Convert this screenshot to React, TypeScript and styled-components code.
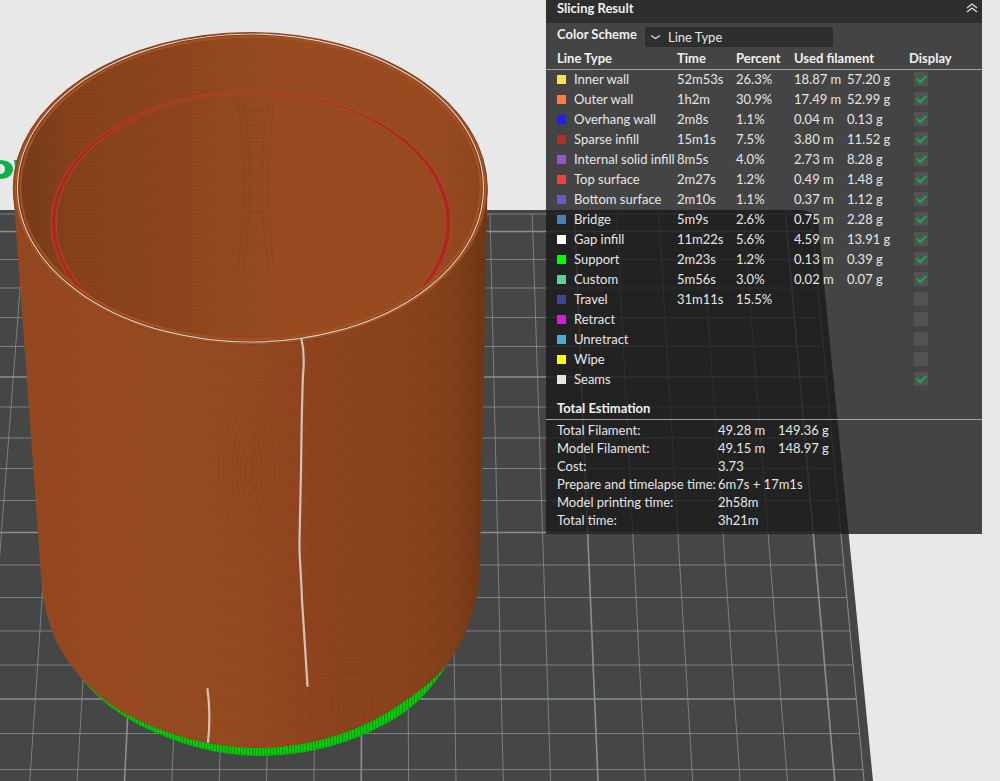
import React, { useState } from 'react';
import styled, { createGlobalStyle } from 'styled-components';

const GlobalStyle = createGlobalStyle`
  *, *::before, *::after { box-sizing: border-box; }
  body {
    margin: 0;
    background: #e8e8e8;
    color: #e6e6e6;
    font-family: Lato, "Liberation Sans", sans-serif;
    font-size: 13px;
    line-height: 18px;
  }
`;

const Viewport = styled.main`
  display: grid;
  min-height: 100vh;
  overflow: hidden;
`;

const Scene = styled.svg`
  grid-area: 1 / 1;
  display: block;
  width: 100%;
  height: 100vh;
`;

const Panel = styled.section`
  grid-area: 1 / 1;
  z-index: 1;
  place-self: start end;
  width: 436px;
  max-width: 100%;
  margin-right: 18px;
  padding-bottom: 5px;
  background: rgba(24, 24, 24, 0.79);
`;

const TitleBar = styled.header`
  display: flex;
  align-items: center;
  justify-content: space-between;
  height: 23px;
  padding: 0 3px 8px 11px;
  background: #2e2e2e;
`;

const Heading = styled.h2`
  margin: 0;
  font-size: 13px;
  line-height: 18px;
  font-weight: 700;
  color: #f0f0f0;
`;

const CollapseButton = styled.button`
  display: grid;
  place-items: center;
  width: 14px;
  height: 14px;
  padding: 0;
  border: 0;
  background: none;
  color: #e0e0e0;
`;

const SchemeRow = styled.div`
  display: flex;
  align-items: flex-start;
  gap: 8px;
  height: 24px;
  padding: 2px 0 0 11px;
`;

const SchemeLabel = styled.label`
  width: 80px;
  font-weight: 700;
  color: #f0f0f0;
`;

const SelectBox = styled.div`
  display: grid;
  align-items: center;
  width: 188px;
  height: 20px;
  margin-top: 2px;
  border-radius: 2px;
  background: #2e2e2e;

  > * { grid-area: 1 / 1; }
  svg { margin-left: 5px; pointer-events: none; z-index: 1; }
`;

const Select = styled.select`
  appearance: none;
  width: 100%;
  height: 20px;
  padding: 0 0 0 23px;
  border: 0;
  background: none;
  color: #e6e6e6;
  font: inherit;
`;

const LineTable = styled.table`
  width: 100%;
  table-layout: fixed;
  border-collapse: collapse;
  white-space: nowrap;

  th, td { height: 20px; padding: 0; text-align: left; font-weight: 400; line-height: 18px; }
  th:first-child { padding-left: 11px; }
  thead th {
    height: 22px;
    border-bottom: 1px solid #a0a0a0;
    font-weight: 700;
    color: #f0f0f0;
  }
`;

const Name = styled.span`
  display: flex;
  align-items: center;
  gap: 8px;
`;

const Swatch = styled.span<{ $color: string }>`
  width: 9px;
  height: 9px;
  background: ${(p) => p.$color};
`;

const Check = styled.input`
  appearance: none;
  display: grid;
  width: 14px;
  height: 14px;
  margin: 0 0 0 5px;
  background: rgba(255, 255, 255, 0.08);

  &:checked::before {
    content: '';
    margin: 3px 1px 2px 2px;
    background: #0fae4b;
    clip-path: polygon(0 48%, 14% 34%, 38% 62%, 88% 2%, 100% 16%, 38% 98%);
  }
`;

const TotalsHeading = styled(Heading)`
  height: 31px;
  padding: 10px 0 0 11px;
  border-bottom: 1px solid #a0a0a0;
  margin-bottom: 1px;
`;

const TotalsTable = styled.table`
  width: 100%;
  table-layout: fixed;
  border-collapse: collapse;
  white-space: nowrap;

  th, td { height: 18px; padding: 0; text-align: left; font-weight: 400; line-height: 18px; }
  th { padding-left: 11px; }
`;

type Line = {
  name: string;
  color: string;
  time?: string;
  percent?: string;
  metres?: string;
  grams?: string;
  shown: boolean;
};

const lines: Line[] = [
  { name: 'Inner wall', color: '#ffe04d', time: '52m53s', percent: '26.3%', metres: '18.87 m', grams: '57.20 g', shown: true },
  { name: 'Outer wall', color: '#ff7d38', time: '1h2m', percent: '30.9%', metres: '17.49 m', grams: '52.99 g', shown: true },
  { name: 'Overhang wall', color: '#1f1fff', time: '2m8s', percent: '1.1%', metres: '0.04 m', grams: '0.13 g', shown: true },
  { name: 'Sparse infill', color: '#b03029', time: '15m1s', percent: '7.5%', metres: '3.80 m', grams: '11.52 g', shown: true },
  { name: 'Internal solid infill', color: '#9654cc', time: '8m5s', percent: '4.0%', metres: '2.73 m', grams: '8.28 g', shown: true },
  { name: 'Top surface', color: '#f04040', time: '2m27s', percent: '1.2%', metres: '0.49 m', grams: '1.48 g', shown: true },
  { name: 'Bottom surface', color: '#665cc7', time: '2m10s', percent: '1.1%', metres: '0.37 m', grams: '1.12 g', shown: true },
  { name: 'Bridge', color: '#4d80ba', time: '5m9s', percent: '2.6%', metres: '0.75 m', grams: '2.28 g', shown: true },
  { name: 'Gap infill', color: '#ffffff', time: '11m22s', percent: '5.6%', metres: '4.59 m', grams: '13.91 g', shown: true },
  { name: 'Support', color: '#00ff00', time: '2m23s', percent: '1.2%', metres: '0.13 m', grams: '0.39 g', shown: true },
  { name: 'Custom', color: '#5ed194', time: '5m56s', percent: '3.0%', metres: '0.02 m', grams: '0.07 g', shown: true },
  { name: 'Travel', color: '#38489b', time: '31m11s', percent: '15.5%', shown: false },
  { name: 'Retract', color: '#cd22d6', shown: false },
  { name: 'Unretract', color: '#49adcf', shown: false },
  { name: 'Wipe', color: '#ffff00', shown: false },
  { name: 'Seams', color: '#e6e6e6', shown: true },
];

const totals: [string, string, string?][] = [
  ['Total Filament:', '49.28 m', '149.36 g'],
  ['Model Filament:', '49.15 m', '148.97 g'],
  ['Cost:', '3.73'],
  ['Prepare and timelapse time:', '6m7s + 17m1s'],
  ['Model printing time:', '2h58m'],
  ['Total time:', '3h21m'],
];

const plateRows = [214, 231.5, 259.5, 288, 317.5, 346.5, 377, 407, 438, 468.5, 500.5, 532.5, 565, 597.5, 631, 665, 699, 733.5, 769.5];
const majorRows = [1, 6, 11, 16];
const plateColumns = Array.from({ length: 20 }, (_, i) => i - 7);

const BODY =
  'M13 188 L40 560 C41 590 46 614 52 631 C58 648 70 665 83 680 C95 693 108 704 126 714 C165 735 210 748 260 748 C315 747 365 730 405 701 C420 691 434 680 446 666 C462 645 471 622 477 596 C479 585 480 570 480 560 L487.500 188 Z';
const SKIRT =
  'M83 680 C98 699 122 716 140 725 C180 745 220 755.500 260 755.500 C320 755 365 737 400 715 C420 702 434 684 446 666 L405 690 L260 730 L126 700 Z';

function PrintPreview() {
  const right = (y: number) => 811 + (y - 214) * 0.0935;
  return (
    <Scene viewBox="0 0 1000 781" preserveAspectRatio="xMinYMin slice" role="img" aria-label="Sliced cup on the build plate">
      <defs>
        <linearGradient id="outside" x1="13" x2="487" y1="0" y2="0" gradientUnits="userSpaceOnUse">
          <stop offset="0" stopColor="#944720" />
          <stop offset="0.25" stopColor="#984b20" />
          <stop offset="0.48" stopColor="#944920" />
          <stop offset="0.64" stopColor="#8e431d" />
          <stop offset="0.82" stopColor="#88431c" />
          <stop offset="0.93" stopColor="#7f3f1a" />
          <stop offset="1" stopColor="#6c3615" />
        </linearGradient>
        <linearGradient id="inside" x1="17" x2="484" y1="0" y2="0" gradientUnits="userSpaceOnUse">
          <stop offset="0" stopColor="#75391a" />
          <stop offset="0.12" stopColor="#86411b" />
          <stop offset="0.35" stopColor="#8e441d" />
          <stop offset="0.55" stopColor="#984b20" />
          <stop offset="0.9" stopColor="#984b20" />
          <stop offset="1" stopColor="#8e441d" />
        </linearGradient>
        <pattern id="layers" width="4" height="3" patternUnits="userSpaceOnUse">
          <rect width="4" height="1" fill="#5f2b10" opacity="0.07" />
          <rect y="2" width="2" height="1" fill="#c0682f" opacity="0.07" />
        </pattern>
        <pattern id="brim" width="3" height="12" patternUnits="userSpaceOnUse">
          <rect width="3" height="12" fill="#02cc05" />
          <rect width="1" height="12" fill="#04960a" />
        </pattern>
        <clipPath id="opening"><ellipse cx="250.500" cy="188" rx="233" ry="154" /></clipPath>
        <clipPath id="bodyClip"><path d={BODY} /></clipPath>
      </defs>

      <path d="M0 160 C8 160 13 164 13 169 C13 175 8 179 0 179 V174 C3 174 5 172 5 169 C5 166 3 164 0 164 Z" fill="#0cb04a" />
      <path d="M14 160 L18 160 L15 167 Z" fill="#0cb04a" />

      <path d="M0 210 H798 Q816 210 818 222 L873 781 H0 Z" fill="#444745" />
      <g stroke="#8b8f8c">
        {plateRows.map((y, i) => (
          <line key={y} x1="0" x2={right(y)} y1={y} y2={y} strokeWidth={majorRows.includes(i) ? 1.6 : 1} opacity={majorRows.includes(i) ? 1 : 0.8} />
        ))}
        {plateColumns.map((k) => {
          const major = (k + 7) % 5 === 0;
          return (
            <line key={k} x1={490 - 42.2 * k} y1="214" x2={503.3 - 47.35 * k} y2="781" strokeWidth={major ? 1.6 : 1} opacity={major ? 1 : 0.8} />
          );
        })}
        <line x1="811" y1="214" x2="864" y2="781" />
      </g>

      <path d={SKIRT} fill="url(#brim)" stroke="#04b808" strokeWidth="0.8" />
      <path d={BODY} fill="url(#outside)" />
      <ellipse cx="250.250" cy="188.500" rx="237.200" ry="156" fill="#9a4b1f" />
      <g clipPath="url(#bodyClip)">
        <rect x="0" y="188" width="500" height="570" fill="url(#layers)" />
        <g fill="none" stroke="#6a3013" strokeWidth="1" opacity="0.3">
          {[5, 10, 15, 20, 25, 30, 36].map((r, i) => (
            <ellipse key={r} cx="249" cy="470" rx={r * 0.85} ry={r * 2.6} opacity={1 - i * 0.12} />
          ))}
          {[0, 1, 2, 3, 4, 5, 6, 7].map((i) => (
            <path key={i} d={`M${333 - i * 2} ${590 + i * 14} Q352 ${560 + i * 14} ${371 + i * 2} ${590 + i * 14}`} opacity="0.5" />
          ))}
          {[8, 14, 20].map((r) => (
            <ellipse key={r} cx="352" cy="705" rx={r} ry={r * 1.7} opacity="0.6" />
          ))}
        </g>
      </g>

      <ellipse cx="250.500" cy="188" rx="233" ry="154" fill="url(#inside)" />
      <g clipPath="url(#opening)">
        <rect x="10" y="30" width="480" height="320" fill="url(#layers)" />
        <g fill="none" stroke="#6a3013" opacity="0.2">
          <path d="M238 100 Q250 180 238 270 M244 100 Q256 180 244 270 M274 100 Q262 180 274 270 M268 100 Q256 180 268 270" />
          <path d="M247 110 H265 M247 126 H265 M247 138 H265 M247 156 H265 M247 175 H265 M247 200 H265 M247 212 H265" />
        </g>
        <path
          d="M51 223 a200 131.500 0 1 1 400 0 a200 131.500 0 1 1 -400 0 Z M56 223 a195 130 0 1 0 390 0 a195 130 0 1 0 -390 0 Z"
          fill="#a92825"
          fillRule="evenodd"
          stroke="#b04a25"
          strokeWidth="1"
        />
        <ellipse cx="250.500" cy="188" rx="230" ry="151.500" fill="none" stroke="#a9521f" strokeWidth="2" />
      </g>
      <ellipse cx="250.250" cy="188.500" rx="237" ry="156" fill="none" stroke="#8c431c" strokeWidth="1" />
      <ellipse cx="250.500" cy="188.500" rx="235" ry="155" fill="none" stroke="#b65b27" strokeWidth="1" />
      <ellipse cx="250.500" cy="188" rx="233" ry="154" fill="none" stroke="#6b3417" strokeWidth="2" />
      <ellipse cx="250.500" cy="188" rx="233" ry="154" fill="none" stroke="#e0cfc6" strokeWidth="1.200" />

      <g fill="none" stroke="#d2c2b8" strokeWidth="2.200" strokeLinecap="round">
        <path d="M301.500 339 C304 350 304.500 360 303 375 C302 400 301.500 430 301 470 L299.500 540 C299 555 301 570 302 600 L307.500 686" />
        <path d="M207.500 689 Q211 715 208 742" />
      </g>
    </Scene>
  );
}

export default function App() {
  const [shown, setShown] = useState(lines.map((l) => l.shown));
  const toggle = (i: number) => setShown((s) => s.map((v, n) => (n === i ? !v : v)));

  return (
    <Viewport>
      <GlobalStyle />
      <PrintPreview />
      <Panel>
        <TitleBar>
          <Heading>Slicing Result</Heading>
          <CollapseButton type="button" aria-label="Collapse">
            <svg width="12" height="10" viewBox="0 0 12 10" fill="none" stroke="currentColor" strokeWidth="1.300">
              <path d="M1 5 L6 1 L11 5 M1 9 L6 5 L11 9" />
            </svg>
          </CollapseButton>
        </TitleBar>
        <SchemeRow>
          <SchemeLabel htmlFor="scheme">Color Scheme</SchemeLabel>
          <SelectBox>
            <svg width="11" height="6" viewBox="0 0 11 6" fill="none" stroke="#e0e0e0" strokeWidth="1.200">
              <path d="M1 1.500 L5.500 4.500 L10 1.500" />
            </svg>
            <Select id="scheme" defaultValue="Line Type">
              <option>Line Type</option>
            </Select>
          </SelectBox>
        </SchemeRow>
        <LineTable>
          <colgroup>
            <col width="131" />
            <col width="59" />
            <col width="58" />
            <col width="53" />
            <col width="62" />
            <col />
          </colgroup>
          <thead>
            <tr>
              <th scope="col">Line Type</th>
              <th scope="col">Time</th>
              <th scope="col">Percent</th>
              <th scope="col" colSpan={2}>Used filament</th>
              <th scope="col">Display</th>
            </tr>
          </thead>
          <tbody>
            {lines.map((line, i) => (
              <tr key={line.name}>
                <th scope="row">
                  <Name>
                    <Swatch $color={line.color} />
                    <label htmlFor={`show-${i}`}>{line.name}</label>
                  </Name>
                </th>
                <td>{line.time}</td>
                <td>{line.percent}</td>
                <td>{line.metres}</td>
                <td>{line.grams}</td>
                <td>
                  <Check id={`show-${i}`} type="checkbox" checked={shown[i]} onChange={() => toggle(i)} />
                </td>
              </tr>
            ))}
          </tbody>
        </LineTable>
        <TotalsHeading>Total Estimation</TotalsHeading>
        <TotalsTable>
          <colgroup>
            <col width="172" />
            <col width="60" />
            <col />
          </colgroup>
          <tbody>
            {totals.map(([label, value, weight]) => (
              <tr key={label}>
                <th scope="row">{label}</th>
                <td colSpan={weight ? 1 : 2}>{value}</td>
                {weight && <td>{weight}</td>}
              </tr>
            ))}
          </tbody>
        </TotalsTable>
      </Panel>
    </Viewport>
  );
}
